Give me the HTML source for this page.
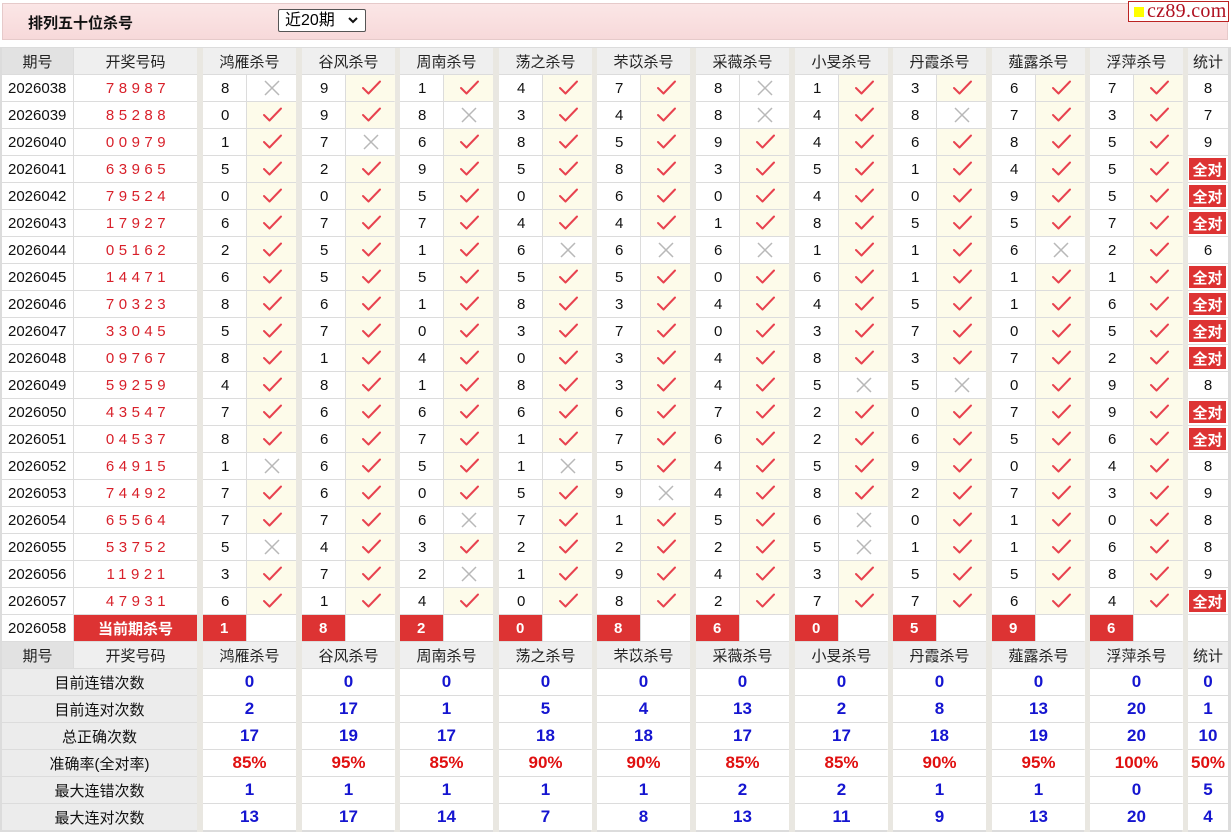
<!DOCTYPE html>
<html><head><meta charset="utf-8"><style>
body{margin:0;background:#fff;font-family:"Liberation Sans","Noto Sans CJK SC",sans-serif;}
#w{position:relative;width:1231px;height:832px;overflow:hidden;background:#fff}
.c{position:absolute;display:flex;align-items:center;justify-content:center;font-size:15px;color:#111;box-sizing:border-box}
.hd{background:#efefef;font-size:15px;color:#222}
.red{background:#d33;color:#fff;font-weight:bold}
.bl{color:#1515d0;font-weight:bold;font-size:17px}
.pc{color:#e01010;font-weight:bold;font-size:17px}
</style></head><body><div id="w">
<div style="position:absolute;left:2px;top:3px;width:1226px;height:37px;background:linear-gradient(#fbe6e6,#f7d9da);border:1px solid #e6caca;box-sizing:border-box"></div>
<div style="position:absolute;left:28px;top:12px;font-size:15px;font-weight:bold;color:#111">排列五十位杀号</div>
<div style="position:absolute;left:278px;top:9px;width:88px;height:23px;background:#fff;border:1px solid #555;border-radius:2px;box-sizing:border-box;font-size:16px;padding-left:6px;line-height:21px">近20期<svg style="position:absolute;right:7px;top:7px" width="10" height="7" viewBox="0 0 10 7"><path d="M1 1L5 5L9 1" fill="none" stroke="#111" stroke-width="2"/></svg></div>
<div style="position:absolute;left:1128px;top:1px;width:101px;height:21px;background:#fff;border:1px solid #b22;box-sizing:border-box;font-family:'Liberation Serif',serif;color:#b01020;font-size:20px;line-height:18px;padding-left:18px;letter-spacing:0.3px">cz89.com<span style="position:absolute;left:5px;top:5px;width:10px;height:10px;background:#ff0"></span></div>
<div id="t" style="position:absolute;left:0;top:47px;width:1231px;height:785px;background:#dcdcdc"></div>
</div>
<script>
var W=document.getElementById('w');
function cell(x,y,w,h,txt,cls,st){var d=document.createElement('div');d.className='c '+(cls||'');d.style.cssText+='left:'+x+'px;top:'+y+'px;width:'+w+'px;height:'+h+'px;'+(st||'');d.innerHTML=txt;W.appendChild(d);return d;}
var GX=[];for(var i=0;i<10;i++)GX.push(Math.round(203+i*98.6));
var names=['鸿雁杀号','谷风杀号','周南杀号','荡之杀号','芣苡杀号','采薇杀号','小旻杀号','丹霞杀号','薤露杀号','浮萍杀号'];
cell(197,48,6,784,'','', 'background:#e9e7e1');
for(var i=1;i<10;i++)cell(GX[i]-6,48,6,784,'','','background:#e9e7e1');
cell(1182,48,6,784,'','','background:#e9e7e1');
function header(y){
 cell(2,y,71,26,'期号','hd','background:#e2e2e2');
 cell(74,y,123,26,'开奖号码','hd');
 for(var i=0;i<10;i++)cell(GX[i],y,93,26,names[i],'hd');
 cell(1188,y,40,26,'统计','hd');
}
header(48);
var CK='<svg width="22" height="18" viewBox="0 0 22 18"><path d="M3 9 L8.5 14.5 L20 2.5" fill="none" stroke="#e8424f" stroke-width="2" stroke-linecap="round" stroke-linejoin="round"/></svg>';
var XX='<svg width="18" height="18" viewBox="0 0 18 18"><path d="M2 2L16 16M16 2L2 16" stroke="#b8b8b8" stroke-width="1.5"/></svg>';
var D=[
['78987','8x 9v 1v 4v 7v 8x 1v 3v 6v 7v','8'],
['85288','0v 9v 8x 3v 4v 8x 4v 8x 7v 3v','7'],
['00979','1v 7x 6v 8v 5v 9v 4v 6v 8v 5v','9'],
['63965','5v 2v 9v 5v 8v 3v 5v 1v 4v 5v','A'],
['79524','0v 0v 5v 0v 6v 0v 4v 0v 9v 5v','A'],
['17927','6v 7v 7v 4v 4v 1v 8v 5v 5v 7v','A'],
['05162','2v 5v 1v 6x 6x 6x 1v 1v 6x 2v','6'],
['14471','6v 5v 5v 5v 5v 0v 6v 1v 1v 1v','A'],
['70323','8v 6v 1v 8v 3v 4v 4v 5v 1v 6v','A'],
['33045','5v 7v 0v 3v 7v 0v 3v 7v 0v 5v','A'],
['09767','8v 1v 4v 0v 3v 4v 8v 3v 7v 2v','A'],
['59259','4v 8v 1v 8v 3v 4v 5x 5x 0v 9v','8'],
['43547','7v 6v 6v 6v 6v 7v 2v 0v 7v 9v','A'],
['04537','8v 6v 7v 1v 7v 6v 2v 6v 5v 6v','A'],
['64915','1x 6v 5v 1x 5v 4v 5v 9v 0v 4v','8'],
['74492','7v 6v 0v 5v 9x 4v 8v 2v 7v 3v','9'],
['65564','7v 7v 6x 7v 1v 5v 6x 0v 1v 0v','8'],
['53752','5x 4v 3v 2v 2v 2v 5x 1v 1v 6v','8'],
['11921','3v 7v 2x 1v 9v 4v 3v 5v 5v 8v','9'],
['47931','6v 1v 4v 0v 8v 2v 7v 7v 6v 4v','A']];
for(var r=0;r<20;r++){
 var y=75+r*27,d=D[r];
 cell(2,y,71,26,'20260'+(38+r),'','justify-content:flex-start;padding-left:6px;background:#fff');
 cell(74,y,123,26,d[0],'','background:#fff;color:#d8202a;letter-spacing:4.5px;padding-left:5px');
 var k=d[1].split(' ');
 for(var i=0;i<10;i++){
  cell(GX[i],y,43,26,k[i][0],'','justify-content:flex-start;padding-left:18px;background:#fff');
  var ok=k[i][1]=='v';
  cell(GX[i]+44,y,49,26,ok?CK:XX,'','background:'+(ok?'#fdfbea':'#fff'));
 }
 if(d[2]=='A'){cell(1188,y,40,26,'','','background:#fff');cell(1189,y+2,37,22,'全对','red','font-size:15px');}
 else cell(1188,y,40,26,d[2],'','background:#fff');
}
var y=615;
cell(2,y,71,26,'2026058','','justify-content:flex-start;padding-left:6px;background:#fff');
cell(74,y,123,26,'当前期杀号','red');
var cur='1 8 2 0 8 6 0 5 9 6'.split(' ');
for(var i=0;i<10;i++){cell(GX[i],y,43,26,cur[i],'red','justify-content:flex-start;padding-left:17px');cell(GX[i]+44,y,49,26,'','','background:#fff');}
cell(1188,y,40,26,'','','background:#fff');
header(642);
var S=[['目前连错次数','0 0 0 0 0 0 0 0 0 0 0'],['目前连对次数','2 17 1 5 4 13 2 8 13 20 1'],['总正确次数','17 19 17 18 18 17 17 18 19 20 10'],['准确率(全对率)','85% 95% 85% 90% 90% 85% 85% 90% 95% 100% 50%'],['最大连错次数','1 1 1 1 1 2 2 1 1 0 5'],['最大连对次数','13 17 14 7 8 13 11 9 13 20 4']];
for(var s=0;s<6;s++){
 var y=669+s*27,v=S[s][1].split(' '),cl=s==3?'pc':'bl';
 cell(2,y,195,26,S[s][0],'','background:#ececec');
 for(var i=0;i<10;i++)cell(GX[i],y,93,26,v[i],cl,'background:#fff');
 cell(1188,y,40,26,v[10],cl,'background:#fff');
}
</script>
</body></html>
